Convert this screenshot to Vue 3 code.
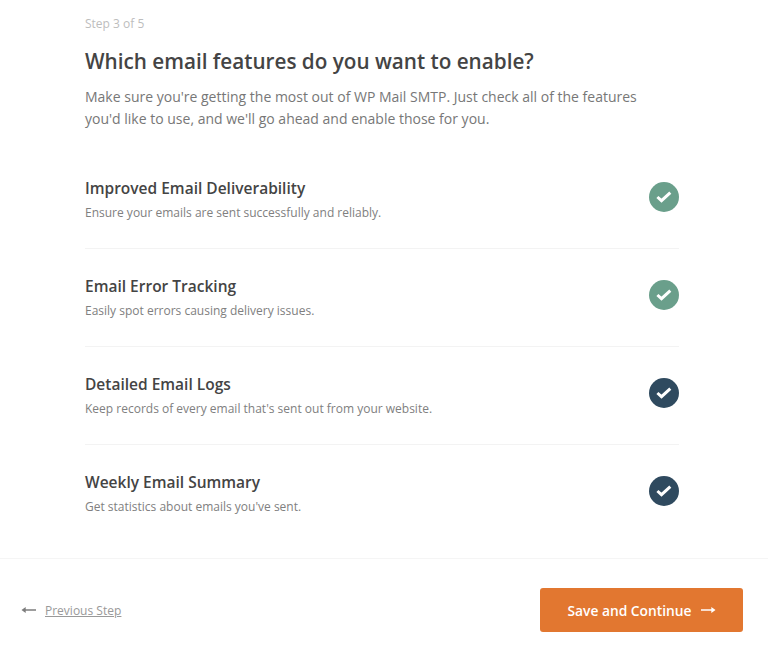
<script setup>
const features = [
  { title: 'Improved Email Deliverability', text: 'Ensure your emails are sent successfully and reliably.', tone: 'green' },
  { title: 'Email Error Tracking', text: 'Easily spot errors causing delivery issues.', tone: 'green' },
  { title: 'Detailed Email Logs', text: "Keep records of every email that's sent out from your website.", tone: 'navy' },
  { title: 'Weekly Email Summary', text: "Get statistics about emails you've sent.", tone: 'navy' },
];
</script>

<template>
  <div class="page">
    <main class="content">
      <p class="step">Step 3 of 5</p>
      <h1>Which email features do you want to enable?</h1>
      <p class="intro">
        Make sure you're getting the most out of WP Mail SMTP. Just check all of the features<br />
        you'd like to use, and we'll go ahead and enable those for you.
      </p>

      <ul class="features">
        <li v-for="item in features" :key="item.title" class="feature">
          <div>
            <h2>{{ item.title }}</h2>
            <p>{{ item.text }}</p>
          </div>
          <span class="check" :class="item.tone">
            <svg viewBox="0 0 30 30" width="30" height="30" aria-hidden="true">
              <path d="M8.4 15l4.1 3.7 8.8-8" fill="none" stroke="#fff" stroke-width="3" />
            </svg>
          </span>
        </li>
      </ul>
    </main>

    <footer class="footer">
      <a class="back" href="#">
        <svg viewBox="0 0 16 8" width="15" height="8" aria-hidden="true">
          <path d="M0.5 4L5 0.8V3.2H16V4.8H5V7.2z" fill="#7d7d7d" />
        </svg>
        <span>Previous Step</span>
      </a>
      <button class="save" type="button">
        Save and Continue
        <svg viewBox="0 0 16 8" width="15" height="8" aria-hidden="true">
          <path d="M15.5 4L11 0.8V3.2H0V4.8H11V7.2z" fill="#fff" />
        </svg>
      </button>
    </footer>
  </div>
</template>

<style scoped>
.page {
  width: 768px;
  height: 653px;
  background: #fff;
  font-family: "Open Sans", "Noto Sans", sans-serif;
  overflow: hidden;
}

.content {
  padding: 16px 89px 0 85px;
}

.step {
  margin: 0;
  font-size: 12px;
  line-height: 16px;
  color: #bdbdbd;
}

h1 {
  margin: 13px 0 0;
  font-size: 20.7px;
  line-height: 32px;
  font-weight: 600;
  color: #444;
}

.intro {
  margin: 9px 0 0;
  font-size: 14px;
  line-height: 22px;
  color: #777;
}

.features {
  list-style: none;
  margin: 21px 0 0;
  padding: 0;
}

.feature {
  display: flex;
  align-items: center;
  justify-content: space-between;
  box-sizing: border-box;
  height: 98px;
  padding-bottom: 2px;
  border-bottom: 1px solid #f3f3f3;
}

.feature:last-child {
  border-bottom: 0;
}

.feature h2 {
  margin: 0;
  font-size: 15.5px;
  line-height: 22px;
  font-weight: 600;
  color: #444;
}

.feature p {
  margin: 6px 0 0;
  font-size: 12px;
  line-height: 16px;
  color: #808080;
}

.check {
  display: flex;
  width: 30px;
  height: 30px;
  margin-bottom: 4px;
  border-radius: 50%;
}

.green {
  background: #6a9f8b;
}

.navy {
  background: #2f4a5f;
}

.footer {
  display: flex;
  align-items: center;
  justify-content: space-between;
  margin-top: 15px;
  padding: 29px 25px 0 21px;
  border-top: 1px solid #f5f5f5;
}

.back {
  display: flex;
  align-items: center;
  gap: 9px;
  font-size: 12px;
  color: #999;
}

.back span {
  text-decoration: underline;
}

.save {
  display: flex;
  align-items: center;
  justify-content: center;
  gap: 9px;
  width: 203px;
  height: 44px;
  border: 0;
  border-radius: 3px;
  background: #e27730;
  color: #fff;
  font: inherit;
  font-size: 13.8px;
  font-weight: 600;
}
</style>
